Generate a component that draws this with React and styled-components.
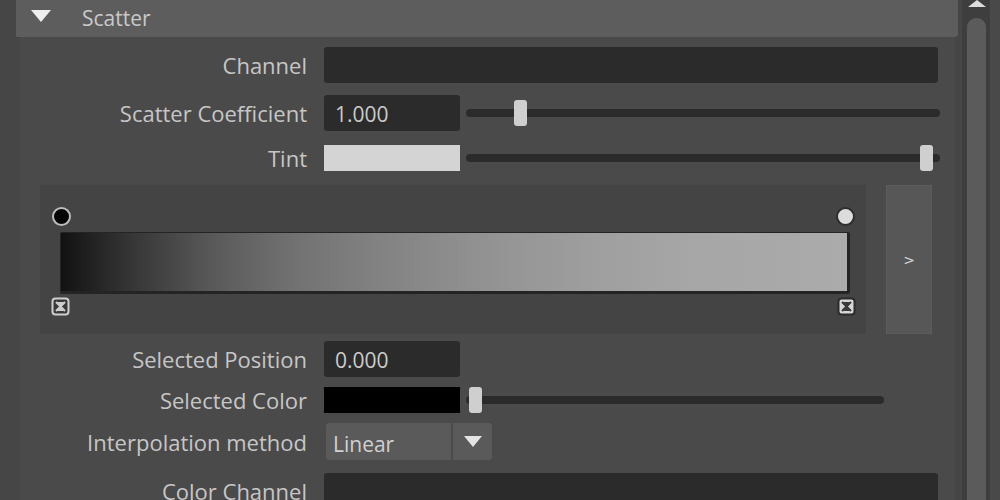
import React from "react";
import styled, { createGlobalStyle } from "styled-components";

const GlobalStyle = createGlobalStyle`
  html, body { margin: 0; padding: 0; background: #454545; overflow: hidden; }
  body { font-family: "Open Sans", "Noto Sans", sans-serif; }
`;

const Page = styled.div`
  display: flex;
  width: 1000px;
  height: 500px;
  background: #464646;
`;

const Gutter = styled.div`
  width: 16px;
  flex: none;
`;

const Main = styled.div`
  width: 942px;
  flex: none;
  display: flex;
  flex-direction: column;
`;

const Header = styled.div`
  height: 37px;
  flex: none;
  background: #5d5d5d;
  border-radius: 0 0 3px 0;
  display: flex;
  align-items: center;
  padding-left: 15px;
  box-shadow: 0 1px 0 #414141;
`;

const Caret = styled.div`
  width: 0;
  height: 0;
  border-left: 10px solid transparent;
  border-right: 10px solid transparent;
  border-top: 12px solid #eeeeee;
  margin-top: -6px;
`;

const Title = styled.div`
  margin-left: 31px;
  font-size: 21px;
  color: #c9c9c9;
  margin-top: -1px;
`;

const Body = styled.div`
  flex: 1;
  margin: 0 3px 0 4px;
  background: #4a4a4a;
  padding: 10px 17px 0 0;
  display: flex;
  flex-direction: column;
`;

const Row = styled.div`
  display: grid;
  grid-template-columns: 287px 1fr;
  column-gap: 17px;
  align-items: center;
  height: ${(p) => p.$h || 36}px;
  margin-top: ${(p) => p.$mt || 0}px;
`;

const Label = styled.div`
  text-align: right;
  font-size: 22px;
  color: #c6c6c6;
  white-space: nowrap;
`;

const Field = styled.div`
  height: 36px;
  width: ${(p) => (p.$w ? `${p.$w}px` : "auto")};
  flex: none;
  background: #2b2b2b;
  border-radius: 3px;
  display: flex;
  align-items: center;
  padding-left: 11px;
  padding-top: 2px;
  box-sizing: border-box;
  font-size: 21px;
  color: #cccccc;
`;

const Controls = styled.div`
  display: flex;
  align-items: center;
  height: 100%;
`;

const Swatch = styled.div`
  width: 136px;
  height: 26px;
  flex: none;
  background: ${(p) => p.$color};
`;

const Slider = styled.div`
  position: relative;
  height: 26px;
  margin-left: 6px;
  display: flex;
  align-items: center;
  flex: ${(p) => (p.$w ? "none" : "1")};
  width: ${(p) => (p.$w ? `${p.$w}px` : "auto")};
  margin-right: ${(p) => p.$mr || 0}px;
`;

const Track = styled.div`
  width: 100%;
  height: 8px;
  border-radius: 4px;
  background: #2b2b2b;
`;

const Handle = styled.div`
  position: absolute;
  top: 0;
  width: 13px;
  height: 26px;
  border-radius: 3px;
  background: #cfcfcf;
`;

const GradientRow = styled.div`
  display: flex;
  margin: 12px 6px 0 20px;
  height: 149px;
  gap: 20px;
`;

const GradientPanel = styled.div`
  flex: 1;
  background: #444444;
  position: relative;
`;

const GradientBar = styled.div`
  position: absolute;
  left: 20px;
  right: 16px;
  top: 47px;
  height: 62px;
  box-sizing: border-box;
  border: 1px solid #242424;
  border-right-width: 3px;
  border-bottom-width: 3px;
  border-radius: 2px;
  background: linear-gradient(
    to right,
    #121212 0%,
    #262626 5%,
    #363636 9%,
    #474747 14%,
    #555555 18%,
    #606060 22%,
    #727272 30%,
    #808080 39%,
    #8a8a8a 47%,
    #949494 56%,
    #9f9f9f 68%,
    #a6a6a6 80%,
    #ababab 100%
  );
`;

const Knob = styled.div`
  position: absolute;
  top: 22px;
  left: ${(p) => p.$x}px;
  width: 19px;
  height: 19px;
  box-sizing: border-box;
  border-radius: 50%;
  background: ${(p) => p.$fill};
  border: 2px solid ${(p) => p.$ring};
`;

const StopMark = styled.svg`
  position: absolute;
  top: 112px;
  left: ${(p) => p.$x}px;
`;

const ExpandButton = styled.div`
  width: 46px;
  flex: none;
  background: #575757;
  box-shadow: inset 0 0 0 1px #5c5c5c;
  display: flex;
  align-items: center;
  justify-content: center;
  color: #d6d6d6;
  font-size: 14px;
  font-family: "DejaVu Sans", sans-serif;
`;

const Dropdown = styled.div`
  display: flex;
  height: 37px;
  gap: 2px;
  margin-left: 2px;
`;

const DropValue = styled.div`
  width: 125px;
  background: #5a5a5a;
  border-radius: 3px 0 0 3px;
  display: flex;
  align-items: center;
  padding-left: 7px;
  box-sizing: border-box;
  font-size: 21px;
  color: #d0d0d0;
  padding-top: 4px;
`;

const DropArrow = styled.div`
  width: 39px;
  background: #5a5a5a;
  border-radius: 0 3px 3px 0;
  display: flex;
  align-items: center;
  justify-content: center;
  &::after {
    content: "";
    border-left: 9px solid transparent;
    border-right: 9px solid transparent;
    border-top: 11px solid #e4e4e4;
  }
`;

const ScrollArea = styled.div`
  width: 28px;
  flex: none;
  margin-left: 4px;
  background: #3e3e3e;
  display: flex;
  flex-direction: column;
  align-items: center;
  box-sizing: border-box;
  padding: 0 4px 0 5px;
`;

const UpArrow = styled.div`
  width: 0;
  height: 0;
  border-left: 9px solid transparent;
  border-right: 9px solid transparent;
  border-bottom: 7px solid #dcdcdc;
`;

const Thumb = styled.div`
  flex: 1;
  width: 19px;
  margin-top: 11px;
  background: #5b5b5b;
  border-radius: 9px 9px 0 0;
`;

const RightEdge = styled.div`
  flex: 1;
  background: #494949;
`;

const Stop = ({ x, fill, stroke, cross }) => (
  <StopMark $x={x} width="19" height="19" viewBox="0 0 19 19">
    <rect x="1.5" y="1.5" width="16" height="16" rx="3" fill={fill} stroke={stroke} strokeWidth="2" />
    <path d="M5 5 L14 14 M14 5 L5 14" stroke={cross} strokeWidth="2" />
    <path d="M6 5 L13 5 L9.5 9 Z" fill={cross} />
    <path d="M6 14 L13 14 L9.5 10 Z" fill={cross} />
  </StopMark>
);

export default function App() {
  return (
    <>
      <GlobalStyle />
      <Page>
        <Gutter />
        <Main>
          <Header>
            <Caret />
            <Title>Scatter</Title>
          </Header>
          <Body>
            <Row>
              <Label>Channel</Label>
              <Field />
            </Row>
            <Row $mt={12}>
              <Label>Scatter Coefficient</Label>
              <Controls>
                <Field $w={136}>1.000</Field>
                <Slider $mr={-2}>
                  <Track />
                  <Handle style={{ left: 48 }} />
                </Slider>
              </Controls>
            </Row>
            <Row $h={30} $mt={12}>
              <Label>Tint</Label>
              <Controls>
                <Swatch $color="#d4d4d4" />
                <Slider $mr={-2}>
                  <Track />
                  <Handle style={{ left: 454 }} />
                </Slider>
              </Controls>
            </Row>
            <GradientRow>
              <GradientPanel>
                <Knob $x={12} $fill="#050505" $ring="#bdbdbd" />
                <Knob $x={796} $fill="#dcdcdc" $ring="#2e2e2e" />
                <GradientBar />
                <Stop x={11} fill="#3a3a3a" stroke="#cfcfcf" cross="#d0d0d0" />
                <Stop x={797} fill="#d8d8d8" stroke="#2c2c2c" cross="#3a3a3a" />
              </GradientPanel>
              <ExpandButton>&gt;</ExpandButton>
            </GradientRow>
            <Row $mt={7}>
              <Label>Selected Position</Label>
              <Controls>
                <Field $w={136}>0.000</Field>
              </Controls>
            </Row>
            <Row $h={30} $mt={8}>
              <Label>Selected Color</Label>
              <Controls>
                <Swatch $color="#000000" />
                <Slider $w={418}>
                  <Track />
                  <Handle style={{ left: 3 }} />
                </Slider>
              </Controls>
            </Row>
            <Row $h={37} $mt={8}>
              <Label>Interpolation method</Label>
              <Dropdown>
                <DropValue>Linear</DropValue>
                <DropArrow />
              </Dropdown>
            </Row>
            <Row $mt={13}>
              <Label>Color Channel</Label>
              <Field />
            </Row>
          </Body>
        </Main>
        <ScrollArea>
          <UpArrow />
          <Thumb />
        </ScrollArea>
        <RightEdge />
      </Page>
    </>
  );
}
